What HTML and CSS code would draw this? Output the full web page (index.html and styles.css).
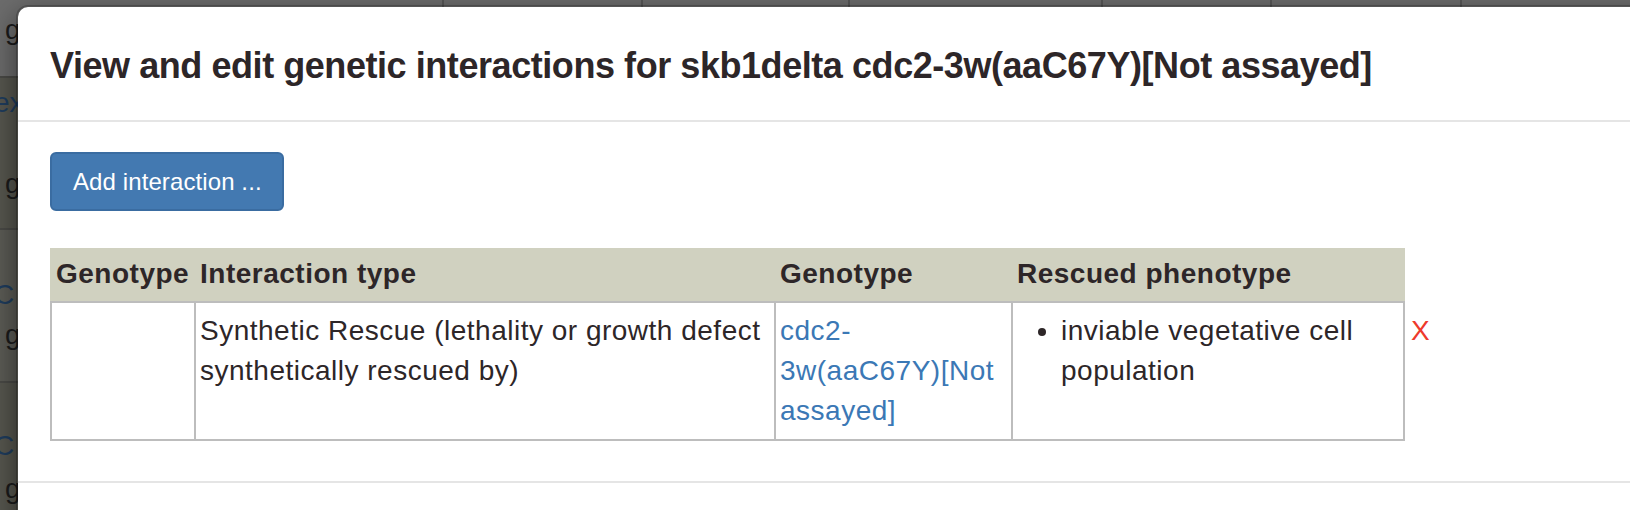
FILE: index.html
```html
<!DOCTYPE html>
<html lang="en">
<head>
<meta charset="utf-8">
<title>Genetic interactions</title>
<link rel="stylesheet" href="styles.css">
</head>
<body>
<div class="page">
  <div class="prow prow-0">
    <div class="pcell pc-0"><div class="pline pg">g</div></div>
    <div class="pcell pc-1"></div>
    <div class="pcell pc-2"></div>
    <div class="pcell pc-3"></div>
    <div class="pcell pc-4"></div>
    <div class="pcell pc-5"></div>
    <div class="pcell pc-6"></div>
  </div>
  <div class="prow prow-1">
    <div class="pcell"><div class="pline plink">ex</div><div class="pline pg pg-far">g</div></div>
  </div>
  <div class="prow prow-2">
    <div class="pcell"><div class="pline plink">C</div><div class="pline pg">g</div></div>
  </div>
  <div class="prow prow-3">
    <div class="pcell"><div class="pline plink">C</div><div class="pline pg pg-near">g</div></div>
  </div>
</div>

<div class="modal">
  <div class="modal-header">
    <h4 class="modal-title">View and edit genetic interactions for skb1delta cdc2-3w(aaC67Y)[Not assayed]</h4>
  </div>
  <div class="modal-body">
    <div class="toolbar">
      <button class="btn-add" type="button">Add interaction ...</button>
    </div>
    <table class="interactions">
      <thead>
        <tr>
          <th class="col-g1">Genotype</th>
          <th class="col-type">Interaction type</th>
          <th class="col-g2">Genotype</th>
          <th class="col-phen">Rescued phenotype</th>
          <th class="col-del"></th>
        </tr>
      </thead>
      <tbody>
        <tr>
          <td></td>
          <td>Synthetic Rescue (lethality or growth defect synthetically rescued by)</td>
          <td><a class="genotype-link" href="#">cdc2-<span class="nobr">3w(aaC67Y)[Not</span> assayed]</a></td>
          <td class="cell-last">
            <ul class="phenotypes">
              <li>inviable vegetative cell population</li>
            </ul>
          </td>
          <td class="cell-del"><span class="del">X</span></td>
        </tr>
      </tbody>
    </table>
  </div>
  <div class="modal-footer"></div>
</div>
</body>
</html>
```

FILE: styles.css
```css
* {
  box-sizing: border-box;
}

html, body {
  margin: 0;
  padding: 0;
  height: 510px;
  overflow: hidden;
}

body {
  position: relative;
  font-family: "Liberation Sans", Arial, Helvetica, sans-serif;
  font-size: 28px;
  line-height: 40px;
  color: #2d2628;
  background: #57574f;
}

/* ---------- page behind the backdrop (already darkened) ---------- */
.page {
  width: 1630px;
}

.prow {
  display: flex;
  border-bottom: 2px solid #4a4a46;
}

.prow-0 {
  height: 78px;
  background: #6c6c6c;
}

.prow-1 {
  height: 152px;
  background: #57574f;
  padding-top: 5px;
}

.prow-2 {
  height: 153px;
  background: #5c5c56;
  padding-top: 45px;
}

.prow-3 {
  height: 140px;
  background: #57574f;
  border-bottom: 0;
  padding-top: 43px;
}

.prow-0 .pcell {
  border-left: 2px solid #565656;
}

.prow-0 .pc-0 {
  border-left: 0;
  width: 442px;
  padding-top: 10px;
}

.pc-1 { width: 199px; }
.pc-2 { width: 207px; }
.pc-3 { width: 253px; }
.pc-4 { width: 169px; }
.pc-5 { width: 190px; }
.pc-6 { width: 170px; }

.pline {
  font-size: 28px;
  line-height: 40px;
  white-space: nowrap;
}

.pg {
  color: #1b1b1b;
  margin-left: 5px;
}

.pg-far {
  margin-top: 41px;
}

.pg-near {
  margin-top: 3px;
}

.plink {
  color: #1f3d5e;
  margin-left: -6px;
}

/* ---------- modal ---------- */
.modal {
  position: absolute;
  left: 16px;
  top: 5px;
  width: 1720px;
  background: #fff;
  background-clip: padding-box;
  border: 2px solid rgba(0, 0, 0, 0.2);
  border-radius: 12px;
  box-shadow: 0 10px 30px rgba(0, 0, 0, 0.5);
}

.modal-header {
  padding: 33px 32px 29px;
  border-bottom: 2px solid #e5e5e5;
}

.modal-title {
  margin: 0;
  font-size: 36px;
  font-weight: bold;
  line-height: 1.42857;
  letter-spacing: -0.44px;
  color: #2d2628;
}

.modal-body {
  padding: 30px 32px 30px;
}

.toolbar {
  display: flex;
}

.btn-add {
  display: inline-flex;
  align-items: center;
  height: 59px;
  padding: 0 20px 0 21px;
  font-family: "Liberation Sans", Arial, Helvetica, sans-serif;
  font-size: 24px;
  line-height: 36px;
  letter-spacing: 0.1px;
  color: #fff;
  background: #4379b1;
  border: 2px solid #3a6ca1;
  border-radius: 6px;
}

.interactions {
  margin-top: 37px;
  margin-bottom: 10px;
  border-collapse: separate;
  border-spacing: 0;
  table-layout: fixed;
  width: 1395px;
  letter-spacing: 0.5px;
}

.interactions th {
  background: #d0d1c0;
  padding: 6px 6px 7px 6px;
  text-align: left;
  font-weight: bold;
  white-space: nowrap;
}

.interactions th.col-del {
  background: transparent;
}

.col-g1 { width: 144px; }
.col-type { width: 580px; }
.col-g2 { width: 237px; }
.col-phen { width: 394px; }
.col-del { width: 40px; }

.interactions td {
  vertical-align: top;
  padding: 8px 6px 8px 4px;
  border-top: 2px solid #bdbdbd;
  border-bottom: 2px solid #bdbdbd;
  border-left: 2px solid #bdbdbd;
}

.interactions td.cell-last {
  border-right: 2px solid #bdbdbd;
}

.interactions td.cell-del {
  border: 0;
  padding: 10px 0 8px 6px;
}

.genotype-link {
  color: #3b78b5;
  text-decoration: none;
}

.nobr {
  white-space: nowrap;
}

.phenotypes {
  margin: 0;
  padding-left: 44px;
}

.del {
  color: #ee3a2c;
}

.modal-footer {
  height: 80px;
  border-top: 2px solid #e5e5e5;
}
```
